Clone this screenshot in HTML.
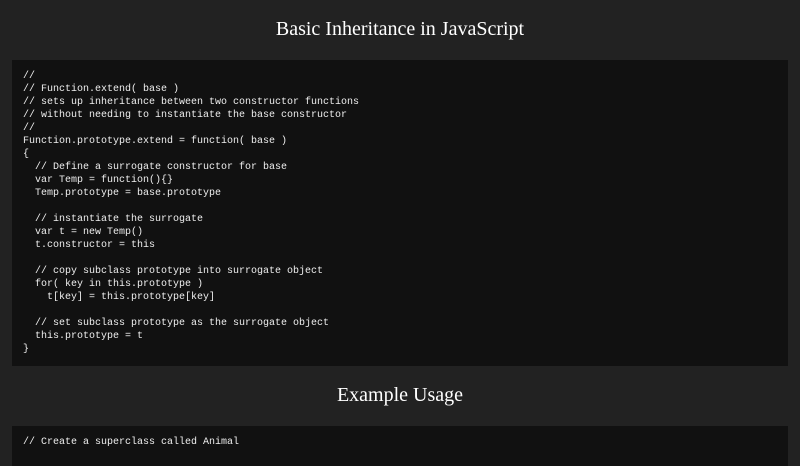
<!DOCTYPE html>
<html><head><style>
html,body{margin:0;padding:0;background:#222;width:800px;height:450px;overflow:hidden}
h1{font-family:"Liberation Serif",serif;font-weight:normal;color:#fff;font-size:20px;text-align:center;margin:0;position:absolute;left:0;right:0}
pre{position:absolute;left:12px;width:776px;margin:0;background:#111;color:#eee;font-family:"Liberation Mono",monospace;font-size:10px;line-height:13px;padding:0 0 0 11px;box-sizing:border-box}
</style></head><body>
<h1 style="top:18px">Basic Inheritance in JavaScript</h1>
<pre style="top:60px;height:306px;padding-top:10px">//
// Function.extend( base )
// sets up inheritance between two constructor functions
// without needing to instantiate the base constructor
//
Function.prototype.extend = function( base )
{
  // Define a surrogate constructor for base
  var Temp = function(){}
  Temp.prototype = base.prototype

  // instantiate the surrogate
  var t = new Temp()
  t.constructor = this

  // copy subclass prototype into surrogate object
  for( key in this.prototype )
    t[key] = this.prototype[key]

  // set subclass prototype as the surrogate object
  this.prototype = t
}</pre>
<h1 style="top:384px">Example Usage</h1>
<pre style="top:426px;height:40px;padding-top:10px">// Create a superclass called Animal</pre>
</body></html>
